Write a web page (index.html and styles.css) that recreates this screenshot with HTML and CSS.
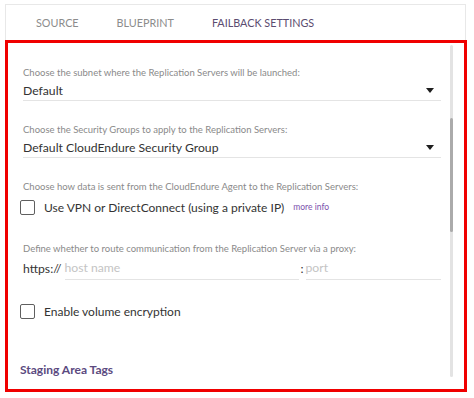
FILE: index.html
```html
<!DOCTYPE html>
<html lang="en">
<head>
    <meta charset="UTF-8">
    <meta name="viewport" content="width=device-width, initial-scale=1.0">
    <title>Failback Settings</title>
    <link rel="stylesheet" href="styles.css">
</head>
<body>
    <div class="card">
        <div class="tabs">
            <div class="tab">SOURCE</div>
            <div class="tab">BLUEPRINT</div>
            <div class="tab active">FAILBACK SETTINGS</div>
        </div>

        <div class="panel">
            <div class="form">
                <div class="field">
                    <div class="label">Choose the subnet where the Replication Servers will be launched:</div>
                    <div class="select">
                        <span>Default</span>
                        <span class="arrow"></span>
                    </div>
                </div>

                <div class="field">
                    <div class="label">Choose the Security Groups to apply to the Replication Servers:</div>
                    <div class="select">
                        <span>Default CloudEndure Security Group</span>
                        <span class="arrow"></span>
                    </div>
                </div>

                <div class="field field-tight">
                    <div class="label">Choose how data is sent from the CloudEndure Agent to the Replication Servers:</div>
                    <label class="check">
                        <span class="box"></span>
                        <span>Use VPN or DirectConnect (using a private IP)</span>
                        <a class="more" href="#">more info</a>
                    </label>
                </div>

                <div class="field">
                    <div class="label">Define whether to route communication from the Replication Server via a proxy:</div>
                    <div class="proxy">
                        <span class="prefix">https://</span>
                        <span class="input host">host name</span>
                        <span class="colon">:</span>
                        <span class="input port">port</span>
                    </div>
                </div>

                <label class="check check-alone">
                    <span class="box"></span>
                    <span>Enable volume encryption</span>
                </label>

                <div class="section-title">Staging Area Tags</div>
            </div>

            <div class="scrollbar">
                <div class="thumb"></div>
            </div>
        </div>
    </div>
</body>
</html>
```

FILE: styles.css
```css
body {
    margin: 0;
    background: #ffffff;
    font-family: Lato, "Open Sans", Arial, sans-serif;
    color: #333333;
}

.card {
    margin: 4px 0 0 5px;
    width: 459px;
    border: 1px solid #e8e8e8;
    border-bottom: none;
    background: white;
}

.tabs {
    display: flex;
    height: 35px;
    padding-left: 11px;
    align-items: center;
}

.tab {
    padding: 0 19px;
    font-size: 10.8px;
    color: #8c8c8c;
}

.tab.active {
    color: #5b4c70;
}

.panel {
    display: flex;
    margin-left: -1px;
    width: 456px;
    height: 346px;
    border: 3px solid #f00000;
}

.form {
    flex: 1;
    padding: 23px 9px 0 12px;
}

.scrollbar {
    width: 5px;
    margin: 2px 11px 12px 0;
    background: #e3e3e3;
    border-radius: 2px;
}

.thumb {
    margin-top: 73px;
    height: 114px;
    background: #ababab;
    border-radius: 2px;
}

.field {
    padding-left: 3px;
    margin-bottom: 22px;
}

.field-tight {
    margin-bottom: 22px;
}

.label {
    font-size: 9.5px;
    line-height: 14px;
    color: #8a8a8a;
}

.select {
    display: flex;
    align-items: center;
    justify-content: space-between;
    height: 20px;
    padding-right: 7px;
    border-bottom: 1px solid #e4e4e4;
    font-size: 12.2px;
    color: #333;
}

.arrow {
    width: 0;
    height: 0;
    border-left: 4.5px solid transparent;
    border-right: 4.5px solid transparent;
    border-top: 5px solid #1e1e1e;
}

.check {
    display: flex;
    align-items: center;
    gap: 9px;
    font-size: 12px;
    color: #333;
    margin-left: -3px;
    height: 26px;
    padding-top: 0;
}

.check-alone {
    margin-left: 0;
    height: 22px;
    margin-top: -2px;
}

.box {
    width: 13px;
    height: 13px;
    border: 1.5px solid #5f5f5f;
    border-radius: 2px;
    flex: none;
}

.more {
    font-size: 8.5px;
    color: #7b52ad;
    text-decoration: none;
}

.proxy {
    display: flex;
    align-items: center;
    height: 24px;
    font-size: 12.2px;
}

.prefix {
    color: #333;
    margin-right: 3px;
}

.input {
    color: #c4c4c4;
    height: 23px;
    line-height: 23px;
    border-bottom: 1px solid #e4e4e4;
}

.host {
    width: 234px;
}

.colon {
    color: #333;
    width: 7px;
    text-align: center;
}

.port {
    width: 135px;
}

.section-title {
    margin-top: 40px;
    font-size: 12px;
    font-weight: bold;
    color: #5b4a80;
}
```
